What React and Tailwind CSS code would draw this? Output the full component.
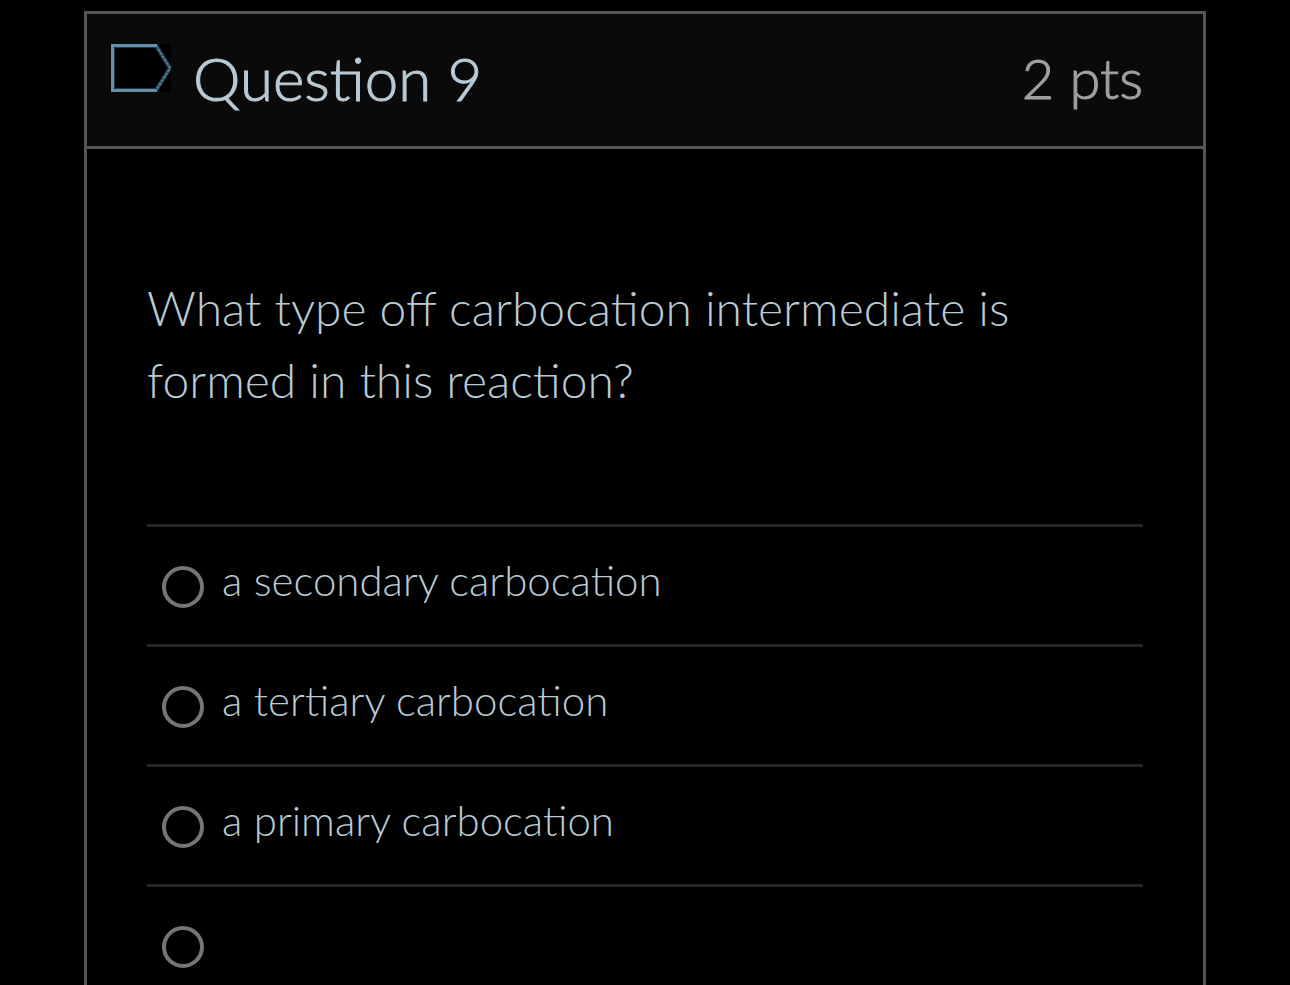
import React from 'react';

const ANSWERS = [
  { id: 'secondary', label: 'a secondary carbocation' },
  { id: 'tertiary', label: 'a tertiary carbocation' },
  { id: 'primary', label: 'a primary carbocation' },
  { id: 'blank', label: '' },
];

function FlagButton() {
  return (
    <button type="button" aria-label="Flag question" className="block w-15 h-12 bg-black shrink-0">
      <svg viewBox="0 0 60 48" className="block w-15 h-12" fill="none">
        <path d="M45 1.5L59 24L45 46.5" stroke="#28414e" strokeWidth="4" />
        <path d="M45 1.5L59 24L45 46.5" stroke="#527a91" strokeWidth="2" strokeDasharray="3 1" />
        <path d="M46 3.5H3.5V44.5H46" stroke="#243944" strokeWidth="1" />
        <path d="M46 1.5H1.5V46.5H46" stroke="#6390aa" strokeWidth="3" />
      </svg>
    </button>
  );
}

function Answer({ id, label }) {
  return (
    <div className="flex h-30 border-t-3 border-[#252525] pl-[15px]">
      <input
        type="radio"
        id={id}
        name="answer"
        aria-label={label || 'Blank answer'}
        className="appearance-none mt-[39px] size-[42px] shrink-0 rounded-full border-4 border-[#757479] checked:bg-[#757479]"
      />
      <label htmlFor={id} className="ml-[18px] pt-[23px] text-[42px] leading-[60px]">{label}</label>
    </div>
  );
}

export default function App() {
  return (
    <div className="h-screen overflow-hidden bg-black px-[84px] pt-[11px] font-['Lato',sans-serif] font-light text-[#b9cad4]">
      <section className="min-h-full border-3 border-[#555555]">
        {/* Title bar */}
        <header className="flex items-start h-[135px] border-b-3 border-[#555555] bg-[#0a0a0a] pl-6 pr-[60px] pt-[30px]">
          <FlagButton />
          <h1 className="ml-[22px] text-[60px] leading-[68px] font-light [-webkit-text-stroke:1px_#b9cad4]">Question 9</h1>
          <span className="ml-auto text-[56px] leading-[68px] text-[#a0a0a0] [-webkit-text-stroke:1px_#a0a0a0]">2 pts</span>
        </header>

        <div className="px-[60px] pt-[123px]">
          <p className="text-[48px] leading-[72px]">What type off carbocation intermediate is formed in this reaction?</p>
          <fieldset className="mt-[108px]">
            {ANSWERS.map(a => <Answer key={a.id} {...a} />)}
          </fieldset>
        </div>
      </section>
    </div>
  );
}
